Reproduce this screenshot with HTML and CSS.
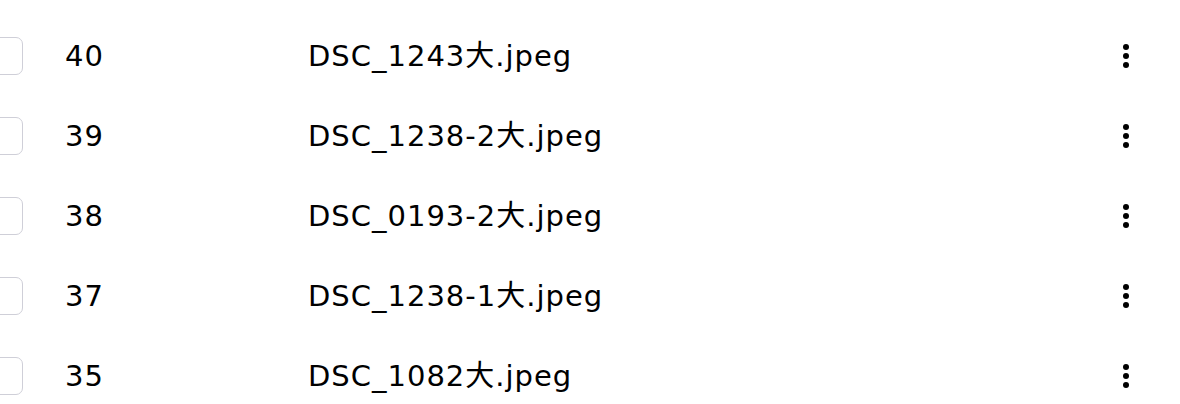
FILE: index.html
```html
<!DOCTYPE html>
<html>
<head>
    <title>Files</title>
    <link rel="stylesheet" href="styles.css">
</head>
<body>
    <div class="file-list">
        <div class="file-row">
            <span class="check"></span>
            <span class="num">40</span>
            <span class="name">DSC_1243大.jpeg</span>
            <span class="more"><i></i><i></i><i></i></span>
        </div>
        <div class="file-row">
            <span class="check"></span>
            <span class="num">39</span>
            <span class="name">DSC_1238-2大.jpeg</span>
            <span class="more"><i></i><i></i><i></i></span>
        </div>
        <div class="file-row">
            <span class="check"></span>
            <span class="num">38</span>
            <span class="name">DSC_0193-2大.jpeg</span>
            <span class="more"><i></i><i></i><i></i></span>
        </div>
        <div class="file-row">
            <span class="check"></span>
            <span class="num">37</span>
            <span class="name">DSC_1238-1大.jpeg</span>
            <span class="more"><i></i><i></i><i></i></span>
        </div>
        <div class="file-row">
            <span class="check"></span>
            <span class="num">35</span>
            <span class="name">DSC_1082大.jpeg</span>
            <span class="more"><i></i><i></i><i></i></span>
        </div>
    </div>
</body>
</html>
```

FILE: styles.css
```css
body {
    margin: 0;
    background-color: #fff;
    font-family: "DejaVu Sans", "Noto Sans CJK JP", sans-serif;
    color: #000;
    overflow: hidden;
}
.file-list {
    padding-top: 16px;
    margin-left: -15px;
}
.file-row {
    display: flex;
    align-items: center;
    height: 80px;
    font-size: 29px;
    line-height: 40px;
    letter-spacing: 1px;
}
.check {
    width: 36px;
    height: 36px;
    border: 1.5px solid #cfcfd8;
    border-radius: 7px;
    flex-shrink: 0;
}
.num {
    margin-left: 42px;
    width: 243px;
}
.name {
    flex: 1;
}
.more {
    display: flex;
    flex-direction: column;
    align-items: center;
    gap: 3px;
    width: 20px;
    margin-right: 44px;
}
.more i {
    display: block;
    width: 6px;
    height: 6px;
    border-radius: 50%;
    background-color: #000;
}
```
